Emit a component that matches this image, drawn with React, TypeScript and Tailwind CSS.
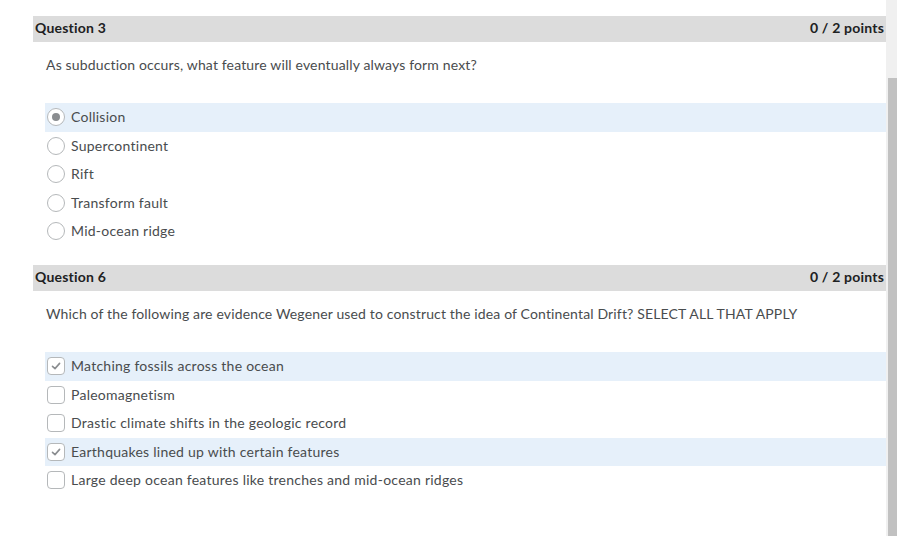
import React from 'react';

interface Option {
  label: string;
  checked: boolean;
}

interface QuestionProps {
  title: string;
  points: string;
  prompt: string;
  kind: 'radio' | 'checkbox';
  options: Option[];
}

const Radio: React.FC<{ checked: boolean }> = ({ checked }) => (
  <span className="w-[18px] h-[18px] rounded-full border border-[#b5b8ba] bg-white flex items-center justify-center shrink-0">
    {checked && <span className="w-[8px] h-[8px] rounded-full bg-[#8a8d90]" />}
  </span>
);

const Checkbox: React.FC<{ checked: boolean }> = ({ checked }) => (
  <span className="w-[18px] h-[18px] rounded-[4px] border border-[#b5b8ba] bg-white flex items-center justify-center shrink-0">
    {checked && (
      <svg width="12" height="12" viewBox="0 0 12 12">
        <path d="M2.5 6.3 L5 8.6 L9.6 3.4" fill="none" stroke="#8a8d90" strokeWidth="1.6" strokeLinecap="round" strokeLinejoin="round" />
      </svg>
    )}
  </span>
);

const Question: React.FC<QuestionProps> = ({ title, points, prompt, kind, options }) => {
  return (
    <div>
      <div className="h-[26px] bg-[#dcdcdc] flex items-center justify-between px-[2px] pb-[4px] text-[14px] tracking-[0.2px] font-bold text-[#202122]">
        <span>{title}</span>
        <span>{points}</span>
      </div>
      <p className="pl-[13px] pt-[15px] pb-[30px] text-[14px] tracking-[0.15px] leading-[16px] text-[#494c4e]">{prompt}</p>
      <div className="pl-[12px]">
        {options.map((o) => (
          <div
            key={o.label}
            className={`h-[28.5px] flex items-center gap-[6px] pl-[2px] text-[14px] tracking-[0.25px] text-[#494c4e] ${o.checked ? 'bg-[#e6f0fa]' : ''}`}
          >
            {kind === 'radio' ? <Radio checked={o.checked} /> : <Checkbox checked={o.checked} />}
            <span className="-mt-[1px]">{o.label}</span>
          </div>
        ))}
      </div>
    </div>
  );
};

export default function App() {
  return (
    <div className="w-[897px] h-[536px] overflow-hidden bg-white flex" style={{ fontFamily: 'Lato, "Open Sans", sans-serif' }}>
      <div className="flex-1 pl-[33px] pt-[16px] flex flex-col gap-[19.5px]">
        <Question
          title="Question 3"
          points="0 / 2 points"
          prompt="As subduction occurs, what feature will eventually always form next?"
          kind="radio"
          options={[
            { label: 'Collision', checked: true },
            { label: 'Supercontinent', checked: false },
            { label: 'Rift', checked: false },
            { label: 'Transform fault', checked: false },
            { label: 'Mid-ocean ridge', checked: false },
          ]}
        />
        <Question
          title="Question 6"
          points="0 / 2 points"
          prompt="Which of the following are evidence Wegener used to construct the idea of Continental Drift? SELECT ALL THAT APPLY"
          kind="checkbox"
          options={[
            { label: 'Matching fossils across the ocean', checked: true },
            { label: 'Paleomagnetism', checked: false },
            { label: 'Drastic climate shifts in the geologic record', checked: false },
            { label: 'Earthquakes lined up with certain features', checked: true },
            { label: 'Large deep ocean features like trenches and mid-ocean ridges', checked: false },
          ]}
        />
      </div>
      <div className="w-[11px] bg-[#f0f0f0] flex flex-col pt-[78px]">
        <div className="flex-1 ml-[2px] bg-[#c1c1c1]" />
      </div>
    </div>
  );
}
